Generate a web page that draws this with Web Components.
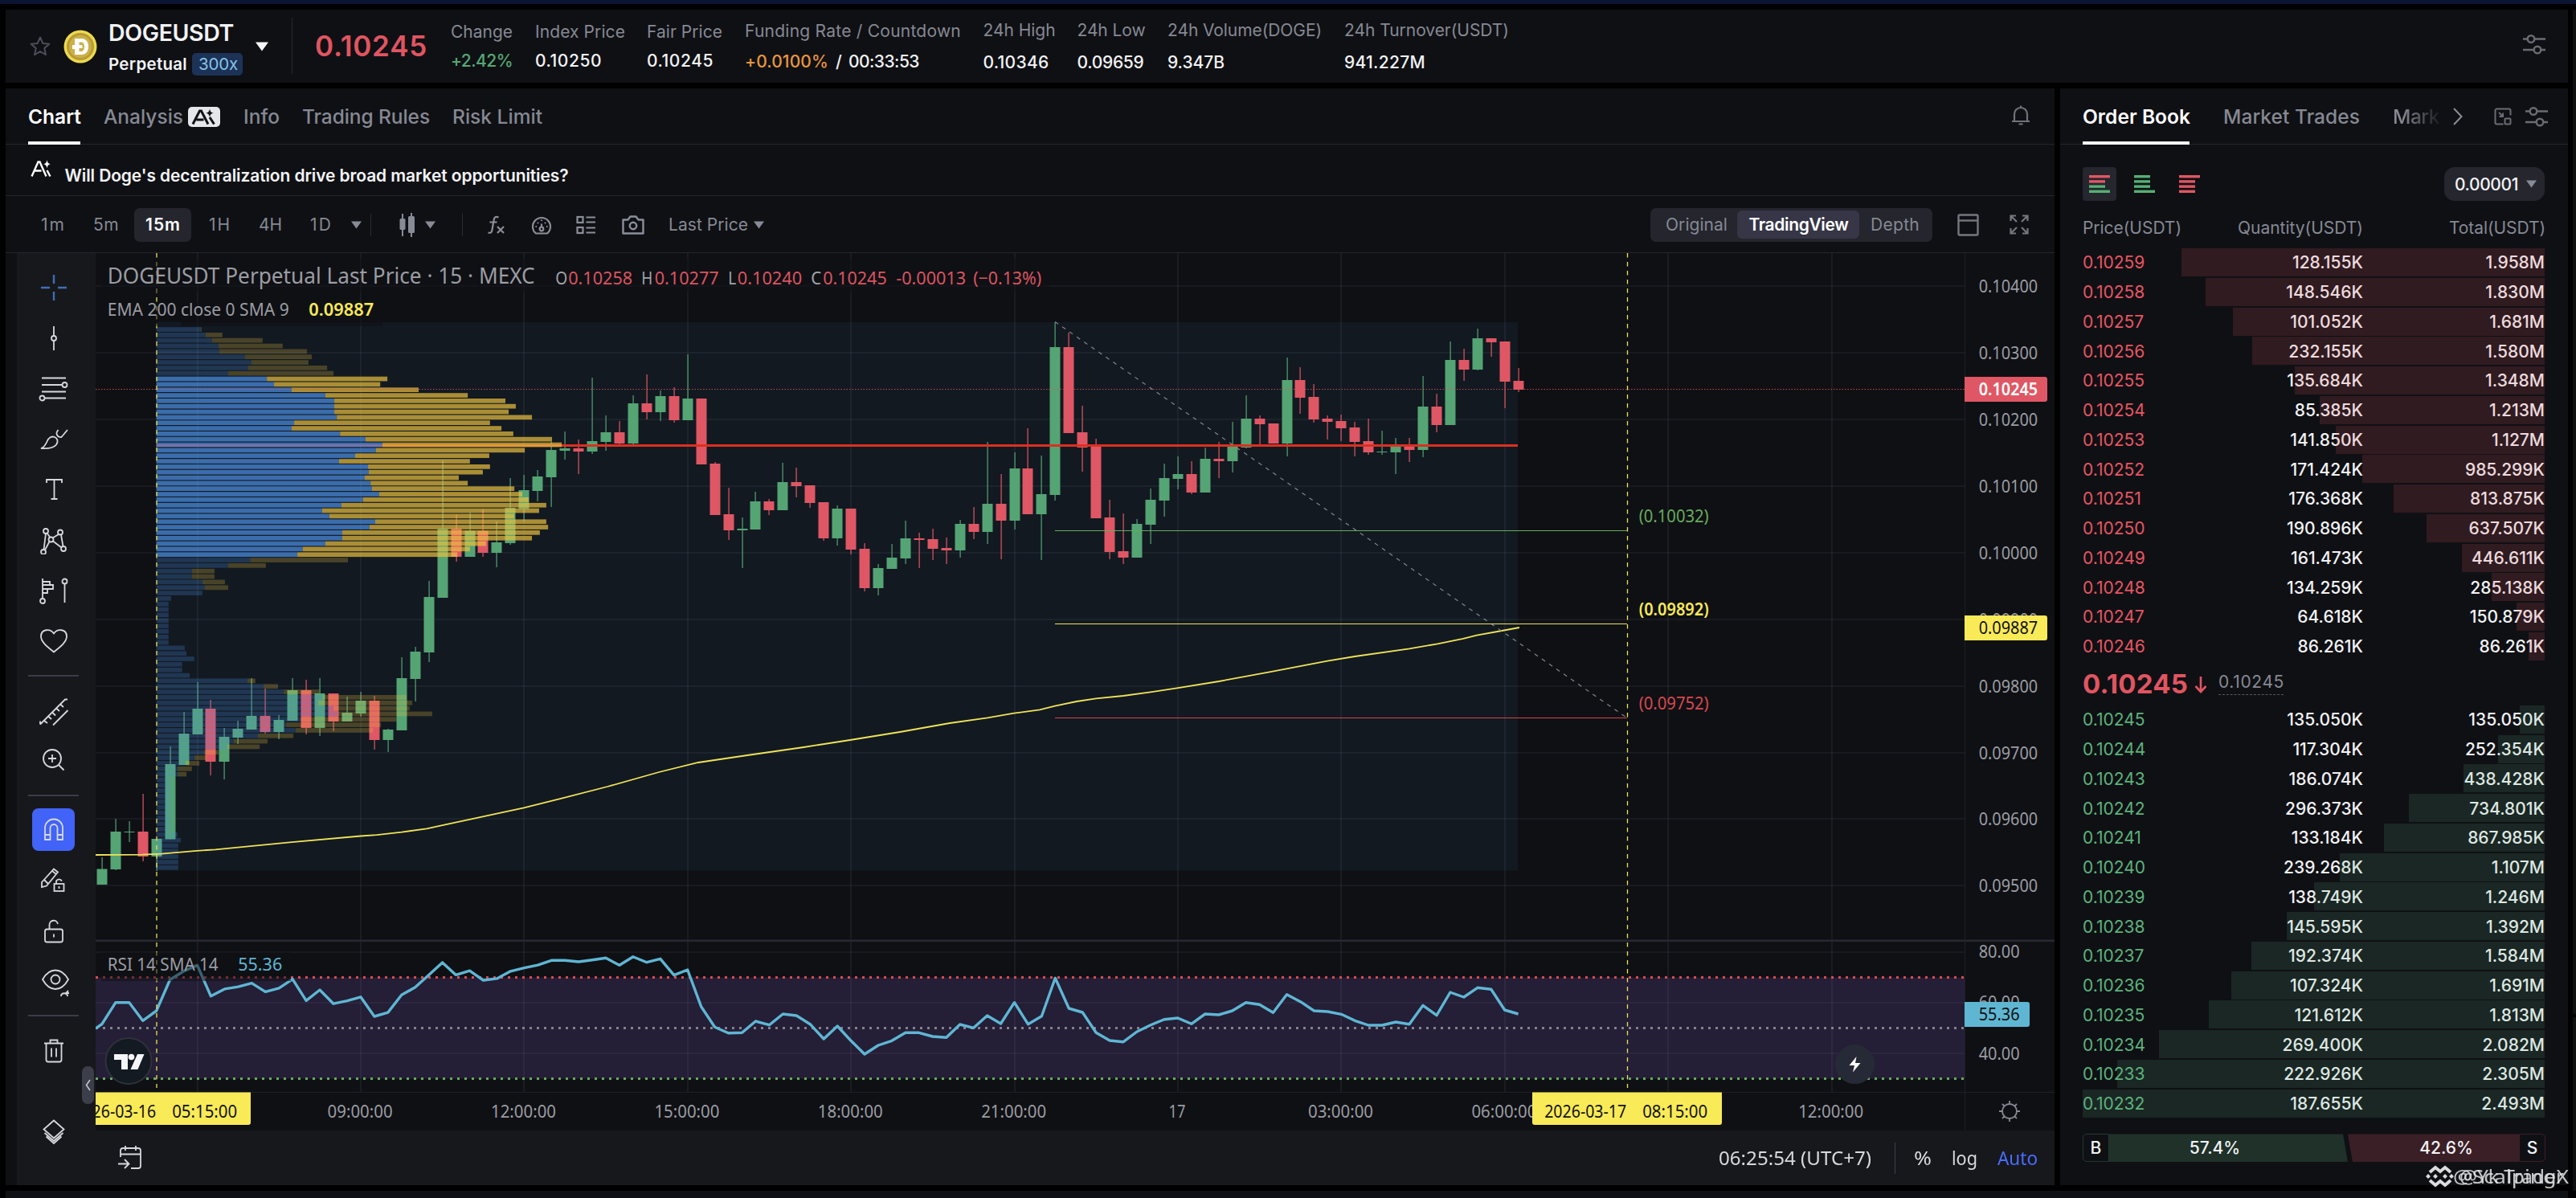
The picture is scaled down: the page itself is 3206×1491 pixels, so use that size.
<!DOCTYPE html>
<html lang="en">
<head>
<meta charset="utf-8">
<title>DOGEUSDT Perpetual</title>
<style>
html,body{margin:0;background:#000}
body{width:3206px;height:1491px;overflow:hidden;font-family:Inter,"Liberation Sans",sans-serif;font-size:21px;line-height:1;color:#f2f3f5;
--panel:#0f1014;--line:#24262d;--mute:#868993;--red:#e05561;--green:#55a874;--tool:#17181c}
</style>
</head>
<body>
<trade-app></trade-app>
<script>
const define=(name,css,html,after)=>customElements.define(name,class extends HTMLElement{
  connectedCallback(){
    if(this.shadowRoot)return;
    const r=this.attachShadow({mode:'open'});
    r.innerHTML=`<style>*{box-sizing:border-box}:host{box-sizing:border-box}${css}</style>`+(typeof html==='function'?html(this):html);
    if(after)after(this,r);
  }
});

/* ---------- icons: [width, height, markup] ---------- */
const ICON={
 star:[28,28,'<path d="M14 2.5l3.3 7.4 8 .8-6 5.4 1.7 8L14 20l-7 4.1 1.7-8-6-5.4 8-.8z" stroke="#4c4f59" stroke-width="2" stroke-linejoin="round"/>'],
 coin:[42,42,'<circle cx="21" cy="21" r="20.5" fill="#ecd94f"/><circle cx="21" cy="21" r="17" fill="#b79a35"/><circle cx="21" cy="21" r="14" fill="#cbb04a"/><path d="M14 11h8c6 0 9 4 9 10s-3 10-9 10h-8v-7h-3v-5h3zM19.500 15.500v3.500h4v4h-4v4h2c3 0 4.500-2 4.500-6s-1.500-5.500-4.500-5.500z" fill="#fff" fill-rule="evenodd"/>'],
 caretL:[18,12,'<path d="M1 .5h16L9 11.500z" fill="#f5f5f5"/>'],
 caret:[13,10,'<path d="M0 .5h13L6.500 9.500z" fill="#868b96"/>'],
 sliders:[28,28,'<g stroke="#6a6c73" stroke-width="2.400"><circle cx="10" cy="7.500" r="4.300"/><path d="M0 7.500h5.500M14.500 7.500H28"/><circle cx="18" cy="21" r="4.300"/><path d="M0 21h13.500M22.500 21H28"/></g>'],
 bell:[26,26,'<g stroke="#6f727a" stroke-width="2"><path d="M5 19v-8a8 8 0 0 1 16 0v8M2 20h22" stroke-width="2.200"/><path d="M13 .5v3M10.500 23.500h5"/></g>'],
 ai:[30,22,'<g stroke="#fff" stroke-width="2.400"><path d="M1.500 20.500L9.500 2.500h2l8 18M5.500 13.500h8M20.500 13l4 7.500"/></g><path d="M20.500 0c.7 3.500 1.500 4.500 4.500 5.200-3 .7-3.800 1.700-4.500 5.200-.7-3.500-1.500-4.500-4.500-5.200 3-.7 3.800-1.700 4.500-5.200z" fill="#fff"/>'],
 aiBadge:[40,25,'<rect width="40" height="25" rx="5" fill="#e6e7ea"/><g stroke="#101116" stroke-width="3"><path d="M6 21.500L14.500 5h2L25 21.500M10.500 16h9M27 13l5.500 8.500"/></g><path d="M27 2.500c.8 3.600 1.700 4.500 4.800 5.200-3.100.7-4 1.700-4.800 5.200-.8-3.500-1.700-4.500-4.800-5.200 3.100-.7 4-1.600 4.800-5.200z" fill="#101116"/>'],
 candles:[22,30,'<path d="M5 1v28M16 0v30" stroke="#868b96" stroke-width="2"/><rect x="1.500" y="7" width="7" height="14" rx="1.500" fill="#868b96"/><rect x="12" y="4" width="8" height="21" rx="1.500" fill="#868b96"/>'],
 fx:[24,24,'<g stroke="#8b8f99" stroke-width="2.200"><path d="M14.500 2.500c-4-1.500-5.500 0-6 4L6.500 18c-.5 3.500-2 4.300-5 3.500M3.500 8.500h9M13 14l8 8M21 14l-8 8"/></g>'],
 gauge:[26,24,'<g stroke="#8b8f99" stroke-width="2.200"><path d="M6 22.500a11 11 0 1 1 14 0zM8 9l1 1M13 5.500V7M18 9l-1 1M5.500 14H7M19 14h1.500"/><circle cx="13" cy="17" r="2.300"/><path d="M13 10.500v4"/></g>'],
 list:[24,24,'<g stroke="#8b8f99" stroke-width="2.200"><rect x="1.500" y="2" width="7" height="7"/><rect x="1.500" y="15" width="7" height="7"/><path d="M12.500 2.500H24M12.500 8.500H24M12.500 15.500H24M12.500 21.500H24"/></g>'],
 camera:[28,24,'<g stroke="#8b8f99" stroke-width="2.400"><path d="M1.500 5.500h6l3-4h7l3 4h6v17h-25z" stroke-linejoin="round"/><circle cx="14" cy="13" r="4.200"/></g>'],
 win:[27,28,'<g stroke="#75777f" stroke-width="2.400"><rect x="1.500" y="1.500" width="24" height="25" rx="1.500"/><path d="M1.500 8.500h24"/></g>'],
 full:[24,25,'<g stroke="#75777f" stroke-width="2.200"><path d="M1.500 8V1.500H8M1.500 1.500L9 9M16 1.500h6.500V8M22.500 1.500L15 9M1.500 17v6.500H8M1.500 23.500L9 16M16 23.500h6.500V17M22.500 23.500L15 16"/></g>'],
 chev:[12,22,'<path d="M1 1l9.500 10L1 21" stroke="#8b8e96" stroke-width="2"/>'],
 pop:[22,22,'<g stroke="#6a6c75" stroke-width="2"><path d="M11.500 20.500H3.500a2 2 0 0 1-2-2v-15a2 2 0 0 1 2-2h15a2 2 0 0 1 2 2v6"/><rect x="13.500" y="13.500" width="7" height="7" rx="1"/><path d="M6 6l5 5M11 6.500V11H6.500"/></g>'],
 cross:[34,34,'<path d="M17 1v11M17 22v11M1 17h11M22 17h11" stroke="#3f6db3" stroke-width="2.400"/>'],
 vline:[34,34,'<circle cx="17" cy="17" r="3"/><path d="M17 2v12M17 20v12"/>'],
 fib:[38,34,'<path d="M4 4.500h30M4 13h26M4 21.500h30M8 29.500h26"/><circle cx="32.500" cy="13" r="3"/><circle cx="4.500" cy="29.500" r="3"/>'],
 brush:[38,32,'<path d="M3 27c4-1 6-5 7.500-8.500 2-5 6-7 9.500-5.500s5 5.500 2 9.500C18.500 27 11 27.500 3 27zM22.500 7c-.5 4 2 6.500 6 6L36 4M22.500 7l2-3"/>'],
 text:[30,32,'<path d="M6 8V4h19v4M15.500 4v24M11.500 28h8"/>'],
 pattern:[36,36,'<circle cx="8" cy="7" r="3"/><circle cx="26" cy="8.500" r="3"/><circle cx="14.500" cy="17.500" r="3"/><circle cx="30" cy="29" r="3"/><circle cx="5" cy="33" r="3"/><path d="M8 10L5.500 30M9.500 9.500l4 5.500M24 11l-7.500 4.500M27 11.500L29.500 26M17 19.500L27.500 27.500M12.500 20L7 30.500"/>'],
 forecast:[38,34,'<path d="M5 2v25M5 6h9v4H5M5 10h13v5H5M5 15h6v5H5M32.500 9v23"/><circle cx="5" cy="30" r="3"/><circle cx="32.500" cy="5.500" r="3"/>'],
 heart:[36,32,'<path d="M18 29.500C10 23 2 17 2 10 2 1 13.500-.5 18 6.500 22.500-.5 34 1 34 10c0 7-8 13-16 19.500z" stroke-linejoin="round"/>'],
 ruler:[38,36,'<path d="M2 33.500L33 2.500h3M2 33.500v-4M7 29l4 3M12 23.500l4 3.500M17 18.500l4 4M22 13.500l4 3.500M27 8.500l4 3.500M18 34.500L36.500 16"/>'],
 zoom:[30,30,'<circle cx="13" cy="13" r="11"/><path d="M21 21l6.500 6.500M13 8v10M8 13h10"/>'],
 magnet:[28,30,'<path d="M3 28V13.500a11 11 0 0 1 22 0V28h-6.500V13.500a4.500 4.500 0 0 0-9 0V28zM3 22h6.500M18.500 22H25"/>'],
 penlock:[36,34,'<path d="M3 20L18 3.500l5 4L9 24.500l-6 1.500zM16 6l5 4M6 17l5 5"/><rect x="18.500" y="22" width="12" height="9"/><path d="M21 22v-3.500a4 4 0 0 1 7 0M24.500 25v3"/>'],
 lock:[30,32,'<rect x="4" y="13.500" width="22" height="16" rx="2.500"/><path d="M9.500 13.500V8a5.300 5.300 0 0 1 10.500-1M15 19.500v4"/>'],
 eye:[38,38,'<path d="M5 14C10 5 15 2.500 21 2.500S32 5 37 14C32 23 27 26 21 26S10 23 5 14z"/><circle cx="21" cy="14" r="5.500"/><path d="M28 35c0-5 8-5 8 0M37 28l-3 3h4"/>'],
 trash:[30,32,'<path d="M3 6.500h24M5.500 6.500V27a2.500 2.500 0 0 0 2.500 2.500h14a2.500 2.500 0 0 0 2.500-2.500V6.500M10.500 6.500V2.500h9v4M12 12.500v11M18 12.500v11"/>'],
 layers:[30,34,'<path d="M15 2.500l12.500 11L15 24.500 2.500 13.500z"/><path d="M3.500 18L15 28l11.500-10M5.500 22.500L15 31l9.500-8.500"/>'],
 cal:[34,32,'<path d="M6 11.500h25M6 15V7a3 3 0 0 1 3-3h19a3 3 0 0 1 3 3v19a3 3 0 0 1-3 3h-9M12 1v6M25 1v6M3 23.500h13M11 18l5.500 5.500L11 29"/>'],
 down:[16,22,'<path d="M8 1v19M1.500 13L8 20l6.500-7" stroke="#e05561" stroke-width="2.600"/>'],
 gear:[28,28,'<g stroke="#868993" stroke-width="1.800"><circle cx="14" cy="14" r="9"/><path d="M14 1v4M14 23v4M1 14h4M23 14h4M5 5l2.500 2.500M20.500 20.500L23 23M23 5l-2.500 2.500M5 23l2.500-2.500"/></g>']
};
define('ui-icon',':host{display:block;flex:none}svg{display:block}',h=>{
  const [w,ht,m]=ICON[h.getAttribute('name')];
  return `<svg width="${w}" height="${ht}" viewBox="0 0 ${w} ${ht}" fill="none" stroke-width="1.800" ${h.hasAttribute('line')?'stroke="#d6d8de"':''}>${m}</svg>`;
});

/* text that keeps an exact advance: spacing for Inter, horizontal scaling for the condensed chart face */
define('fit-text',':host{display:block;flex:none;white-space:nowrap;line-height:1}span{display:inline-block;transform-origin:0 50%}','<span><slot></slot></span>',(h,r)=>{
  const w=+h.getAttribute('w'),s=r.querySelector('span'),n=h.textContent.length;
  h.style.width=w+'px';
  const nat=s.getBoundingClientRect().width;
  if(h.hasAttribute('squeeze'))s.style.transform=`scaleX(${w/nat})`;
  else s.style.letterSpacing=((w+1-nat)/n)+'px';
});
const T=(w,t,ml=0,st='')=>`<fit-text w="${w}" style="margin-left:${ml}px;${st}">${t}</fit-text>`;
const I=(n,ml=0,st='')=>`<ui-icon name="${n}" style="margin-left:${ml}px;${st}"></ui-icon>`;

/* ---------- ticker header ---------- */
define('ticker-field',`:host{display:flex;flex-direction:column;flex:none}
fit-text{height:20px;line-height:20px}.l{color:var(--mute)}`,h=>{
  const a=n=>h.getAttribute(n);
  h.style.cssText+=`;padding-top:${a('p')}px;gap:${a('g')}px;width:${a('w')}px;margin-left:${a('ml')}px`;
  return `<fit-text class="l" w="${a('lw')}">${a('label')}</fit-text><slot></slot>`;
});
define('ticker-bar',`:host{display:flex;height:91px;background:var(--panel);align-items:flex-start}
.c{display:flex;align-items:center;height:91px}
.name{display:flex;flex-direction:column;margin-left:14px;width:169px;padding-top:14px}
.n2{display:flex;align-items:center;margin-top:10px;height:28px;font-weight:600;font-size:20.5px}
.tag{display:flex;align-items:center;width:63px;height:28px;border-radius:5px;background:#1c3256;color:#86c3e8;margin-left:7px;font-weight:400;padding-left:8px}
.div{width:1px;height:70px;background:#26282f;margin:10px 0 0 28px}
.price{color:var(--red);font-size:35px;font-weight:600}
ticker-field>fit-text,.fr{height:20px;line-height:20px;font-weight:500}.fr{display:flex}`,
`<div class="c">${I('star',29)}${I('coin',15)}</div>
<div class="name">${T(155,'DOGEUSDT',0,'font-size:28.5px;font-weight:600;height:30px;line-height:30px')}
<div class="n2">${T(97,'Perpetual')}<div class="tag">${T(48,'300x')}</div></div></div>
<div class="c">${I('caretL',13)}</div><div class="div"></div>
<div class="c price">${T(139,'0.10245',28)}</div>
<ticker-field label="Change" lw="76" w="76" ml="30" p="17.500" g="16.700">${T(76,'+2.42%',0,'color:var(--green)')}</ticker-field>
<ticker-field label="Index Price" lw="111" w="111" ml="29" p="17.500" g="16.700">${T(82,'0.10250')}</ticker-field>
<ticker-field label="Fair Price" lw="93" w="93" ml="28" p="17.500" g="16.700">${T(82,'0.10245')}</ticker-field>
<ticker-field label="Funding Rate / Countdown" lw="268" w="268" ml="29" p="16.500" g="17.700"><div class="fr">${T(103,'+0.0100%',0,'color:#e8963c')}${T(7,'/',10)}${T(87,'00:33:53',9)}</div></ticker-field>
<ticker-field label="24h High" lw="89" w="89" ml="28.500" p="16" g="20">${T(81,'0.10346')}</ticker-field>
<ticker-field label="24h Low" lw="84" w="84" ml="28" p="16" g="20">${T(82,'0.09659')}</ticker-field>
<ticker-field label="24h Volume(DOGE)" lw="191" w="191" ml="28.500" p="16" g="20">${T(70,'9.347B')}</ticker-field>
<ticker-field label="24h Turnover(USDT)" lw="204" w="204" ml="29" p="16" g="20">${T(100,'941.227M')}</ticker-field>
<div class="c" style="margin-left:auto;padding-right:28px;height:86px">${I('sliders')}</div>`);

/* ---------- tabs ---------- */
define('tab-item',`:host{display:flex;align-items:center;height:70px;position:relative;flex:none;color:var(--mute);font-weight:500;font-size:24.5px}
:host([on]){color:#fff;font-weight:600}
:host([on])::after{content:"";position:absolute;left:0;right:0;bottom:0;height:4px;background:#f3f4f6}`,'<slot></slot>');
define('chart-tabs',`:host{display:flex;height:70px;box-shadow:inset 0 -1px var(--line);padding-left:28px}`,
`<tab-item on>${T(65,'Chart')}</tab-item>
<tab-item style="margin-left:29px">${T(98,'Analysis')}${I('aiBadge',7)}</tab-item>
<tab-item style="margin-left:29px">${T(44,'Info')}</tab-item>
<tab-item style="margin-left:29px">${T(158,'Trading Rules')}</tab-item>
<tab-item style="margin-left:29px">${T(111,'Risk Limit')}</tab-item>
<tab-item style="margin-left:auto;margin-right:29px;padding-bottom:2px">${I('bell')}</tab-item>`);
define('ai-prompt',`:host{display:flex;height:64px;box-shadow:inset 0 -1px var(--line);padding-left:31px;font-weight:600;align-items:center}`,
`${I('ai',0,'margin-top:-1px;height:26px')}${T(626,"Will Doge's decentralization drive broad market opportunities?",12.5,'padding-top:13px')}`);
define('chart-toolbar',`:host{display:flex;height:71px;box-shadow:inset 0 -1px var(--line);padding-left:44px;align-items:center;color:#868993}
.on{display:flex;align-items:center;justify-content:center;width:71px;height:42px;border-radius:7px;background:#25262d;color:#fff;font-weight:600;margin-left:20px}
.d{width:1px;height:28px;background:#2b2d34;flex:none}
.seg{display:flex;align-items:center;width:351px;height:42px;border-radius:7px;background:#24252d;margin-left:auto;padding-left:19px}
.seg b{display:flex;align-items:center;justify-content:center;width:152px;height:35px;border-radius:6px;background:#363646;color:#fff;font-weight:600;margin:0 14px 0 13px}`,
`${T(30,'1m')}${T(31,'5m',35)}<div class="on">${T(43,'15m')}</div>${T(27,'1H',22)}${T(28,'4H',35)}${T(27,'1D',36)}${I('caret',24)}
<div class="d" style="margin-left:11px"></div>${I('candles',34)}${I('caret',11)}<div class="d" style="margin-left:33px"></div>
${I('fx',30)}${I('gauge',31)}${I('list',30)}${I('camera',33)}${T(98,'Last Price',30)}${I('caret',8)}
<div class="seg">${T(76,'Original')}<b>${T(123,'TradingView')}</b>${T(60,'Depth')}</div>${I('win',31)}${I('full',38,'margin-right:32px')}`);

/* ---------- drawing tools ---------- */
define('tool-rail',`:host{display:block;width:98px;background:var(--tool);margin-left:14px;flex:none;position:relative}
.c{display:flex;flex-direction:column;align-items:center;padding-right:7px}
.slot{display:flex;align-items:center;justify-content:center;height:var(--h);flex:none;width:98px}
hr{border:0;width:63px;height:1.500px;background:#3a3d46;margin:0;flex:none}
.on{width:53px;height:53px;border-radius:8px;background:#4263f7;display:flex;align-items:center;justify-content:center}
.fold{position:absolute;left:81px;top:1012px;width:15px;height:47px;border-radius:7px;background:#3c3f49}
.fold svg{display:block;margin:16px 4px}`,()=>{
  /* [icon, centre y inside the rail] */
  const list=[['cross',43],['vline',106],['fib',168],['brush',232],['text',294],['pattern',357],['forecast',420],['heart',483],['-',526],['ruler',571],['zoom',631],['-',675],['*magnet',717],['penlock',780],['lock',844],['eye',909],['-',949],['trash',993],['layers',1094]];
  let y=0,o='';
  for(const [n,c] of list){const h=n==='-'?2:n[0]==='*'?54:36;const gap=c-h/2-y;y=c+h/2;
    o+=`<div class="slot" style="--h:${h}px;margin-top:${gap}px">${n==='-'?'<hr>':n[0]==='*'?'<div class="on"><ui-icon line name="magnet"></ui-icon></div>':`<ui-icon line name="${n}"></ui-icon>`}</div>`;}
  return `<div class="c">${o}</div><div class="fold"><svg width="7" height="15" fill="none" stroke="#c9cbd1" stroke-width="1.500"><path d="M6 1L1.500 7.500 6 14"/></svg></div>`;
});

/* ---------- price chart ---------- */
const G='#55a474',R='#df5764';
const X=i=>245.5+16.95*i;
/* candle runs: first index, y origin, unit, then "colour top bottom high low" */
const RUNS=[
[-7,940,2.846,'g 402 458 361 458,g 270 404 225 407,g 270 273 233 307,r 270 359 137 376,g 296 359 296 410'],
[-2,380,2.6133,'g 1492 1737 1435 1737,g 1393 1495 1322 1495,g 1312 1396 1226 1396,r 1312 1484 1283 1529,g 1403 1484 1375 1542,g 1377 1406 1351 1427,g 1335 1380 1213 1380,r 1335 1388 1247 1393,g 1348 1388 1333 1411,g 1252 1351 1213 1351,r 1252 1375 1218 1396,g 1262 1375 1213 1401,r 1262 1354 1262 1385,g 1325 1354 1273 1354,g 1286 1328 1257 1338,r 1286 1414 1270 1445,g 1380 1414 1377 1453,g 1213 1382 1145 1382,g 1126 1215 1111 1288,g 949 1129 896 1160,g 727 951 504 951,r 727 818 680 834,g 733 818 674 818,r 733 805 663 818,g 771 805 703 852,g 659 774 562 779,g 601 662 551 703,g 557 604 536 638,g 470 559 443 656'],
[27,400,3,'g 474 483 411 516,r 474 486 441 570,g 447 486 210 495,g 414 450 351 483,r 414 456 372 462,g 306 456 276 462,r 306 339 198 366,g 279 339 258 372,r 279 369 246 378,g 288 369 123 369,r 288 534 288 534,r 531 723 525 723,r 720 780 621 816,g 774 780 732 921,g 672 777 636 777,r 672 705 663 723,g 600 705 528 705,r 600 615 546 657,r 612 678 612 696,r 675 810 675 819,g 699 810 687 837,r 699 852 699 870,r 849 996 828 1008,g 921 996 906 1023,g 882 924 831 924,g 810 885 744 906,r 810 816 789 921,r 813 849 774 891,r 846 855 807 906,g 756 855 741 882,r 756 786 693 813,g 681 786 450 831,r 681 744 570 888,g 549 744 489 777,r 549 720 399 720,g 645 720 501 891,g 96 648 3 669'],
[64,380,2.6133,'r 136 416 89 416,r 413 463 327 541,r 457 693 434 693,r 690 802 632 826,r 800 821 677 841,g 711 821 695 821,g 632 713 596 776,g 562 635 515 687,g 549 564 491 598,r 549 609 507 614,g 499 609 463 609,r 499 507 444 562,g 457 507 379 544,g 368 463 293 465,r 368 387 358 457,r 384 449 384 449,g 243 449 170 491,r 243 301 201 353,r 298 371 256 382,r 368 379 358 436,r 376 400 355 442,r 397 444 379 491,r 442 478 368 486,g 476 478 408 486,g 457 478 431 549,r 457 470 431 510,g 329 470 230 494,r 329 389 287 413,g 178 389 118 389,r 178 209 141 246,g 107 209 76 212,r 107 120 107 167,r 118 248 118 335,r 246 274 204 282']
];
function candles(){
  let o='';
  for(const [i0,y0,k,s] of RUNS)s.split(',').forEach((t,j)=>{
    const [c,...v]=t.split(' ');const [a,b,h,l]=v.map(n=>Math.round((y0+n/k)*2)/2);
    const x=Math.round(X(i0+j)),f=c==='g'?G:R;
    o+=`<rect x="${x-.5}" y="${h}" width="1.200" height="${l-h}" fill="${f}"/><rect x="${x-6.5}" y="${a}" width="13" height="${Math.max(1,b-a)}" fill="${f}"/>`;
  });
  return o;
}
/* volume-by-price rows: up end, total end */
const VOL='505 1066,560 562,573 620,591 732,609 788,611 856,683 869,701 860,692 912,636 930,744 1080,764 1060,813 1167,907 1304,932 1409,932 1438,932 1418,939 1483,820 1366,813 1398,948 1431,1019 1539,1066 1566,1048 1463,990 1364,945 1310,1026 1366,1028 1346,1017 1279,1033 1304,1037 1434,1057 1456,1012 1474,952 1523,898 1503,918 1434,1046 1523,1030 1528,954 1505,954 1483,907 1355,844 1310,829 1275,697 970,636 741,535 598,535 598,564 627,571 636,564,477,470,470,470,470,470,470,470,470,515,520,542,508,508,529,690 712,735 775,791 890,900 1133,887 1149,930 1142,942 1205,838 1105,797 1062,824 1040,719 818,651 746,634 724,569 609,542 576,517 556,495 535,495 520,476,476,476,476,476,476,476,476,476,476,495,504,497,497,497,497,497'.split(',').map(s=>s.split(' ').map(n=>n/2.24));
function profile(){
  return VOL.map(([a,b],k)=>{
    const y=(380+(53.1+17.86*k)/2.6133).toFixed(1),op=k>=10&&k<=42?.7:k?.25:.08;
    return `<g opacity="${op}"><rect x="194.500" y="${y}" width="${a-194.5}" height="5.700" fill="#4d91e7"/>`+(b?`<rect x="${a}" y="${y}" width="${b-a}" height="5.700" fill="${k?'#ebc040':'#000'}"/>`:'')+'</g>';
  }).join('');
}
const EMA='119,1064 177,1063.7 201,1062.6 245,1058.8 268,1057.4 363,1048.2 449,1040.5 469,1039.1 500,1035.6 531,1031.4 554,1026.4 652,1005.4 700,993.4 756,979 820,961 869,949 930,940 1000,930 1058,921 1120,911 1182,900 1229,893.3 1262,887.7 1294,883.3 1313,878.7 1340,873 1364,869.4 1398,866 1432,861.4 1465,856.4 1517,848 1550,841.9 1584,835.7 1618,829.2 1652,822.7 1686,817 1754,807.4 1789,801.3 1821,794.8 1838,790.6 1872,784.5 1891,781';
const RSI_A=[952,876,876,940,905,795,765,744,853,828,820,807,838,825,793,869,831,880,870,856,925,911,849,822,778,734,778,763,797,791,765,753,743];
const RSI_B=[76,76,81,74,67,94,62,83,70,131,111,248,325,347,346,303,317,276,282,314,369,321,376,426,393,376,346,346,360,364,315,328,282,312,233,314,284,142,255,270,346,375,380,342,317,296,291,313,276,279,264,233,241,271,203,230,264,267,277,301,318,318,306,314,244,281,195,213,178,184,261,276];
const rsi=()=>'119,1280 '+RSI_A.map((v,j)=>`${X(j-7).toFixed(1)},${(940+v/2.846).toFixed(1)}`).join(' ')+' '+RSI_B.map((v,j)=>`${X(26+j).toFixed(1)},${(1170+v/3).toFixed(1)}`).join(' ');
const S=(x,y,w,t,f='#9b9da3',sz=21.3,ex='')=>`<text x="${x-.8}" y="${y}" textLength="${w}" lengthAdjust="spacingAndGlyphs" fill="${f}" font-size="${sz}" ${ex}>${t}</text>`;
function chart(){
  const gx=[0,1,2,3,4,5,6,7,8,9,10].map(i=>245.5+203.4*i),gy=[0,1,2,3,4,5,6,7,8,9].map(i=>356.4+82.88*i),ry=[1184.5,1247.5,1311.3];
  let o='<rect x="119" y="1216.500" width="2326" height="126" fill="#241e36"/><rect x="194.500" y="401" width="1694.500" height="682.700" fill="#121921"/>';
  o+='<g fill="rgba(150,160,190,.15)">'+gx.map(x=>`<rect x="${Math.round(x)-.6}" y="315" width="1.200" height="1044"/>`).join('')+[...gy,...ry].map(y=>`<rect x="119" y="${Math.round(y)-.5}" width="2326" height="1"/>`).join('')+'</g>';
  o+='<rect x="119" y="1169.500" width="2438" height="2.500" fill="#26292f"/><rect x="119" y="1359" width="2438" height="1" fill="#1f2026"/><rect x="2445" y="315" width="1" height="1092" fill="#1f2026"/>';
  o+=candles()+'<rect x="194.500" y="553" width="1694.500" height="3" fill="#dd301f"/>'+profile();
  o+=`<polyline points="${EMA}" fill="none" stroke="#efe35a" stroke-width="1.800"/>`;
  o+='<path d="M119 484.500H2445" stroke="#e05561" stroke-width="1" stroke-dasharray="1.500 2" opacity=".85"/>';
  o+='<path d="M1313 400.500L2025 893.500" stroke="#85868d" stroke-width="1.200" stroke-dasharray="5 6" fill="none"/>';
  o+='<path d="M1313 660.500H2025" stroke="#66ac5c"/><path d="M1313 776.500H2025" stroke="#efe35a"/><path d="M1313 893.500H2025" stroke="#d1454c"/>';
  o+='<g stroke-width="3" stroke-dasharray="3 6"><path d="M119 1216.500H2445" stroke="#dc4a52"/><path d="M119 1279.500H2445" stroke="#83828c"/><path d="M119 1342.500H2445" stroke="#66ac5c"/></g>';
  o+=`<polyline points="${rsi()}" fill="none" stroke="#5fb6d3" stroke-width="3.400" stroke-linejoin="round"/>`;
  o+='<path d="M195 315V1354M2025.500 315V1354" stroke="#efe35a" stroke-width="1.300" stroke-dasharray="5.500 5.500"/>';
  /* legends */
  o+='<g fill="rgba(15,16,20,.5)"><rect x="126" y="322" width="1180" height="42"/><rect x="126" y="376" width="350" height="30"/><rect x="126" y="1185" width="236" height="36"/></g>';
  o+=S(134.5,353,532,'DOGEUSDT Perpetual Last Price · 15 · MEXC','#9b9da3',27);
  const g='#a2a4aa',r='#dc5460';
  o+=S(692,353.7,15,'O',g)+S(708,353.7,80,'0.10258',r)+S(799,353.7,14,'H',g)+S(815.5,353.7,80,'0.10277',r)+S(907,353.7,10,'L',g)+S(918.5,353.7,80.5,'0.10240',r)+S(1010,353.7,13,'C',g)+S(1025,353.7,79.5,'0.10245',r)+S(1116,353.7,87,'-0.00013',r)+S(1212,353.7,85,'(−0.13%)',r);
  o+=S(134.5,392.7,226,'EMA 200 close 0 SMA 9')+S(385,392.7,81,'0.09887','#f9ea58',21.3,'font-weight="600"');
  o+=S(134.5,1208,138,'RSI 14 SMA 14')+S(297,1208,55,'55.36','#5fb6d3');
  o+=S(2040.5,650,87,'(0.10032)','#66ac5c')+S(2040.5,766.3,87,'(0.09892)','#f9ea58',21.3,'font-weight="600"')+S(2040.5,883.3,87,'(0.09752)','#d8484f');
  /* price scale */
  gy.forEach((y,i)=>o+=S(2463.5,y+8,73.5,((10400-i*100)/1e5).toFixed(5)));
  o+=S(2463.5,1192,51,'80.00')+S(2463.5,1255,51,'60.00')+S(2463.5,1318.5,51,'40.00');
  const tag=(y,h,w,f)=>`<path d="M2445 ${y}h${w-3}q3 0 3 3v${h-6}q0 3-3 3h-${w-3}z" fill="${f}"/>`;
  o+=tag(469,31,103,'#df5764')+S(2463.5,492,73.5,'0.10245','#fff',21.3,'font-weight="600"')+tag(766,31,103,'#f9ea58')+S(2463.5,789,73.5,'0.09887','#111')+tag(1247,31,81,'#5fb6d3')+S(2463.5,1269.5,51,'55.36','#111');
  /* time scale */
  const tm=['','09:00:00','12:00:00','15:00:00','18:00:00','21:00:00','17','03:00:00','06:00:00','','12:00:00'];
  tm.forEach((t,i)=>{if(t){const w=t==='17'?21:81;o+=S(gx[i]-w/2,1390.5,w,t);}});
  o+='<path d="M119 1359.500H312V1397q0 3-3 3H119z" fill="#f9ea58"/><svg x="119" y="1360" width="193" height="40" viewBox="119 1360 193 40">'+S(93,1390.5,102,'2026-03-16','#111')+S(215,1390.5,81,'05:15:00','#111')+'</svg>';
  o+='<path d="M1907 1359.500H2143V1397q0 3-3 3H1910q-3 0-3-3z" fill="#f9ea58"/>'+S(1923,1391,102,'2026-03-17','#111')+S(2045,1391,81,'08:15:00','#111');
  /* round badges */
  o+='<circle cx="160" cy="1320.500" r="28.500" fill="#131a21" stroke="#2f323c" stroke-width="2"/><path d="M142 1312h17v19h-8v-12h-9zM171 1312h8.500l-8 19h-9z" fill="#f4f5f7"/><circle cx="163.500" cy="1315.500" r="3.800" fill="#f4f5f7"/>';
  o+='<circle cx="2308.500" cy="1324.500" r="24.500" fill="#262a36"/><path d="M2310.500 1315l-9 11h6.500l-2 8.500 9.500-11.500h-6.500z" fill="#fff"/>';
  return o;
}
define('price-chart',`:host{display:block;height:1092px;position:relative}svg{display:block}text{font-family:"Noto Sans","Open Sans",sans-serif}
.gear{position:absolute;right:42px;bottom:10px}`,()=>`<svg width="2438" height="1092" viewBox="119 315 2438 1092">${chart()}</svg><div class="gear">${I('gear')}</div>`);
define('chart-footer',`:host{display:flex;align-items:center;height:68px;background:var(--tool);padding:0 21px 0 25px;font-family:"Noto Sans","Open Sans",sans-serif;font-size:24px;color:#d8d9dd}
i{width:1.500px;height:39px;background:#3c3f48;margin:0 23px 0 29px}`,
`<ui-icon line name="cal"></ui-icon><fit-text squeeze w="190" style="margin-left:auto">06:25:54 (UTC+7)</fit-text><i></i>
<fit-text squeeze w="22">%</fit-text><fit-text squeeze w="32" style="margin-left:25px">log</fit-text><fit-text squeeze w="50" style="margin-left:25px;color:#4a6cff">Auto</fit-text>`);
define('chart-panel',`:host{display:flex;flex-direction:column;width:2550px;height:1365px;background:var(--panel)}
.b{display:flex;flex:1}.m{display:flex;flex-direction:column;width:2438px}`,
`<chart-tabs></chart-tabs><ai-prompt></ai-prompt><chart-toolbar></chart-toolbar><div class="b"><tool-rail></tool-rail><div class="m"><price-chart></price-chart><chart-footer></chart-footer></div></div>`);

/* ---------- order book ---------- */
const ASKS='0.10259 128.155K 1.958M,0.10258 148.546K 1.830M,0.10257 101.052K 1.681M,0.10256 232.155K 1.580M,0.10255 135.684K 1.348M,0.10254 85.385K 1.213M,0.10253 141.850K 1.127M,0.10252 171.424K 985.299K,0.10251 176.368K 813.875K,0.10250 190.896K 637.507K,0.10249 161.473K 446.611K,0.10248 134.259K 285.138K,0.10247 64.618K 150.879K,0.10246 86.261K 86.261K';
const BIDS='0.10245 135.050K 135.050K,0.10244 117.304K 252.354K,0.10243 186.074K 438.428K,0.10242 296.373K 734.801K,0.10241 133.184K 867.985K,0.10240 239.268K 1.107M,0.10239 138.749K 1.246M,0.10238 145.595K 1.392M,0.10237 192.374K 1.584M,0.10236 107.324K 1.691M,0.10235 121.612K 1.813M,0.10234 269.400K 2.082M,0.10233 222.926K 2.305M,0.10232 187.655K 2.493M';
define('book-row',`:host{display:grid;grid-template-columns:122px 227px 226px;width:575px;height:36.76px;padding-bottom:1px;align-items:center;position:relative;font-weight:500;flex:none}
span{text-align:right}.p{text-align:left;font-weight:400}
.bar{position:absolute;right:0;top:0;height:35px}`,h=>{
  const [p,q,t]=h.getAttribute('v').split(' '),ask=h.hasAttribute('ask');
  const n=parseFloat(t)*(t.endsWith('M')?1:.001);
  return `<span class="p" style="color:${ask?'#e65662':'#5cb37c'}">${p}</span><span>${q}</span><span>${t}</span><div class="bar" style="width:${(n/2.493*575).toFixed(1)}px;background:${ask?'rgba(226,90,102,.16)':'rgba(96,176,130,.15)'}"></div>`;
});
define('depth-mode',`:host{display:flex;align-items:center;justify-content:center;width:42px;height:42px;border-radius:4px}:host([on]){background:#25262e}`,h=>{
  const c=h.getAttribute('c').split(','),w=h.getAttribute('l').split(',');
  return `<svg width="26" height="24">${c.map((f,i)=>`<rect x="0" y="${1+i*6.2}" width="${w[i]}" height="3.400" fill="${f==='r'?'#df5764':'#55b074'}"/>`).join('')}</svg>`;
});
define('ratio-bar',`:host{display:flex;width:576px;height:35px;margin-top:19px;font-weight:500;align-items:stretch;flex:none}
.k{width:33px;display:flex;align-items:center;justify-content:center;border:1.500px solid #22382f;border-radius:5px 0 0 5px}
.s{border-color:#3b1f26;border-radius:0 5px 5px 0}
.b,.a{display:flex;align-items:center;justify-content:center}
.b{width:297px;background:#1f3129;clip-path:polygon(0 0,291px 0,297px 100%,0 100%);padding-right:34px}
.a{width:213px;background:#3b1f26;clip-path:polygon(0 0,100% 0,100% 100%,6px 100%);padding-left:32px}`,
`<div class="k">B</div><div class="b">57.4%</div><div class="a">42.6%</div><div class="k s">S</div>`);
define('order-book',`:host{display:flex;flex-direction:column;width:632px;height:1365px;background:var(--panel)}
.tabs{display:flex;height:70px;box-shadow:inset 0 -1px var(--line);padding-left:28px;flex:none}
.cut{-webkit-mask-image:linear-gradient(90deg,#000 20%,transparent 105%)}
.modes{display:flex;padding:28px 29px 0 28px;height:70px;flex:none}
.sel{display:flex;align-items:center;width:125px;height:42px;border-radius:13px;background:#25262e;margin-left:auto;padding-left:13px;font-weight:500}
.hd{display:flex;height:57px;align-items:center;padding:2px 29px 0 28px;color:var(--mute);margin-top:4px;margin-bottom:-2px;flex:none}
.rows{display:flex;flex-direction:column;padding-left:28px}
.mid{display:flex;height:54.400px;width:575px;align-items:center;flex:none;padding-top:2px}
.last{font-size:33px;font-weight:700;color:var(--red)}
.ix{border-bottom:1px dashed #55575f;padding-bottom:5px;color:var(--mute)}`,
()=>`<div class="tabs"><tab-item on>${T(133,'Order Book')}</tab-item><tab-item style="margin-left:42px">${T(169,'Market Trades')}</tab-item><tab-item class="cut" style="margin-left:42px;width:60px;overflow:hidden">${T(57,'Mark')}</tab-item>
<tab-item style="margin-left:15px">${I('chev')}${I('pop',39)}${I('sliders',17,'width:25px')}</tab-item></div>
<div class="modes"><depth-mode on c="r,r,g,g" l="26,20,20,26"></depth-mode><depth-mode style="margin-left:14px" c="g,g,g,g" l="20,20,20,26"></depth-mode><depth-mode style="margin-left:14px" c="r,r,r,r" l="26,20,20,20"></depth-mode>
<div class="sel">${T(78,'0.00001')}${I('caret',11)}</div></div>
<div class="hd">${T(122,'Price(USDT)')}${T(155,'Quantity(USDT)',71)}${T(119,'Total(USDT)',108)}</div>
<div class="rows">${ASKS.split(',').map(v=>`<book-row ask v="${v}"></book-row>`).join('')}
<div class="mid"><div class="last">${T(130,'0.10245')}</div>${I('down',9)}<div class="ix" style="margin-left:14px">${T(81,'0.10245')}</div></div>
${BIDS.split(',').map(v=>`<book-row v="${v}"></book-row>`).join('')}<ratio-bar></ratio-bar></div>`);

define('water-mark',`:host{position:absolute;left:3018px;top:1448px;width:188px;height:34px;display:block}
svg{display:block;overflow:visible}text{font-family:"Noto Sans",sans-serif;fill:#e4e4e6;opacity:.85}`,
`<svg width="188" height="34"><g fill="none" stroke="#dcdcde" stroke-width="4"><path d="M6 11l7-6 6 5 6-5 7 6M6 21l7 6 6-5 6 5 7-6"/></g><g fill="#dcdcde"><path d="M1 16l3-3 3 3-3 3zM10 16l3-3 3 3-3 3zM22 16l3-3 3 3-3 3zM30 16l3-3 3 3-3 3z"/></g>
<text x="35" y="25" font-size="23" textLength="144" lengthAdjust="spacingAndGlyphs">@ScalpingX</text><text x="43" y="25" font-size="23" textLength="130" lengthAdjust="spacingAndGlyphs">@Yk Trader</text></svg>`);

define('trade-app',`:host{display:flex;flex-direction:column;width:3206px;height:1491px;background:#000;position:relative;overflow:hidden}
.top{height:5px;background:#0c1433;flex:none}
.w{display:flex;height:1470px;margin-top:7px;flex:none}
.l{display:flex;flex-direction:column;width:3189px;margin-left:7px;gap:7px;height:1463px}
.row{display:flex;gap:7px}
.side{display:flex;flex-direction:column;gap:4px;width:4px;margin-left:6px}
.side div{background:var(--panel);height:1270px}.side div+div{height:220px}
.bot{height:9px;background:var(--panel);margin:0 10px 0 7px;flex:none}`,
`<div class="top"></div><div class="w"><div class="l"><ticker-bar></ticker-bar><div class="row"><chart-panel></chart-panel><order-book></order-book></div></div><div class="side"><div></div><div></div></div></div><div class="bot"></div><water-mark></water-mark>`);
</script>
</body>
</html>
